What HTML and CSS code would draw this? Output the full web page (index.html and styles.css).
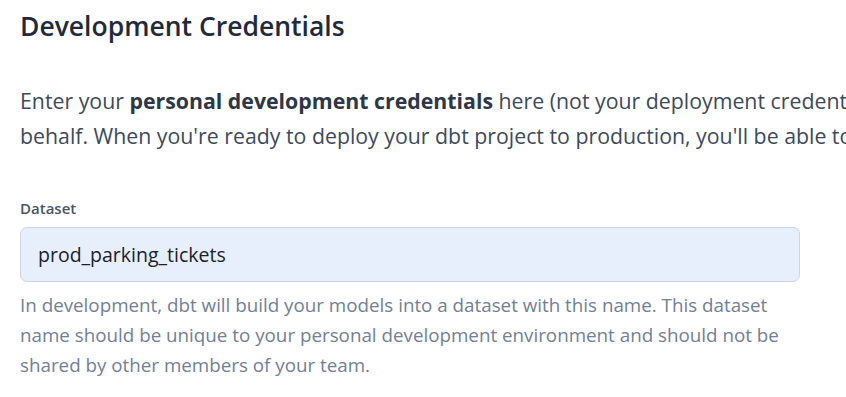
FILE: index.html
```html
<!DOCTYPE html>
<html lang="en">
<head>
  <meta charset="UTF-8">
  <meta name="viewport" content="width=device-width, initial-scale=1.0">
  <title>Development Credentials</title>
  <link rel="stylesheet" href="styles.css">
</head>
<body>
<div class="credentials">
  <h2 class="title">Development Credentials</h2>

  <p class="intro">Enter your <strong>personal development credentials</strong> here (not your deployment credentials). dbt will connect to your database on your<br>behalf. When you're ready to deploy your dbt project to production, you'll be able to supply separate credentials.</p>

  <div class="form-group">
    <label for="dataset">Dataset</label>
    <input type="text" id="dataset" value="prod_parking_tickets">
    <p class="help">In development, dbt will build your models into a dataset with this name. This dataset name should be unique to your personal development environment and should not be shared by other members of your team.</p>
  </div>
</div>
</body>
</html>
```

FILE: styles.css
```css
html, body {
  margin: 0;
  overflow: hidden;
}
body {
  font-family: "Open Sans", "Noto Sans", sans-serif;
  background-color: #fff;
  color: #2d3748;
}
.credentials {
  padding: 9px 20px 0 20px;
}
.title {
  margin: 0;
  font-size: 26.5px;
  font-weight: 600;
  line-height: 34px;
  color: #1f2b3d;
}
.intro {
  width: 1300px;
  white-space: nowrap;
  margin: 40px 0 0 0;
  font-size: 21.3px;
  line-height: 35px;
  color: #3d4a5c;
}
.intro strong {
  font-weight: 700;
  color: #2d3748;
}
.form-group {
  width: 780px;
  margin-top: 45px;
}
label {
  display: block;
  font-size: 15px;
  font-weight: 600;
  color: #4a5568;
  line-height: 20px;
  margin-bottom: 9px;
}
input {
  display: block;
  width: 100%;
  height: 55px;
  box-sizing: border-box;
  padding: 0 17px;
  font-family: inherit;
  font-size: 19.5px;
  color: #1a202c;
  background-color: #e8effc;
  border: 1px solid #cbd5e0;
  border-radius: 7px;
  outline: none;
}
.help {
  margin: 8px 0 0 0;
  font-size: 18.8px;
  line-height: 30px;
  color: #718096;
}
```
